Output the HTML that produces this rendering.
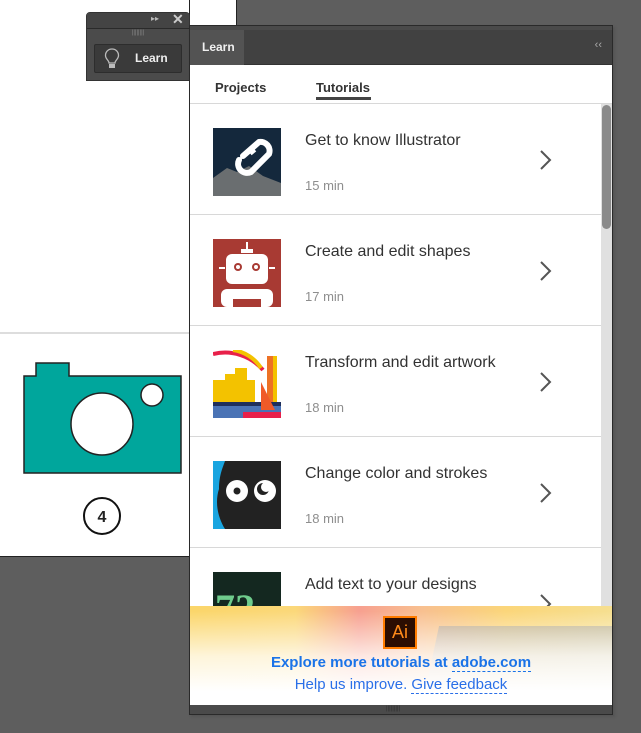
<!DOCTYPE html>
<html><head><style>
*{margin:0;padding:0;box-sizing:border-box}
body{width:641px;height:733px;background:#5e5e5e;position:relative;overflow:hidden;font-family:"Liberation Sans",sans-serif}
.abs{position:absolute}
.row{position:absolute;left:0;width:411px;height:111px;border-bottom:1px solid #d8d8d8}
.row .th{position:absolute;left:23px;top:24px;width:68px;height:68px;overflow:hidden}
.row .t{position:absolute;left:115px;top:28px;font-size:16px;color:#323232}
.row .m{position:absolute;left:115px;top:74px;font-size:13px;color:#8e8e8e}
.row .c{position:absolute;left:349px;top:45px}
</style></head><body>
<div class="abs" style="left:0;top:0;width:237px;height:80px;background:#fff;border-right:1px solid #222"></div>
<div class="abs" style="left:0;top:0;width:190px;height:557px;background:#fff;border-right:1px solid #222;border-bottom:1px solid #222"></div>
<div class="abs" style="left:0;top:332px;width:189px;height:2px;background:#ddd"></div>
<svg class="abs" style="left:0;top:320px" width="190" height="230">
<path d="M24 56H36V43H69V56H181V153H24Z" fill="#00a69c" stroke="#222" stroke-width="1.5"/>
<circle cx="102" cy="104" r="31" fill="#fff" stroke="#222" stroke-width="1.5"/>
<circle cx="152" cy="75" r="11" fill="#fff" stroke="#222" stroke-width="1.5"/>
<circle cx="102" cy="196" r="18" fill="#fff" stroke="#111" stroke-width="2"/>
<text x="102" y="202" text-anchor="middle" font-size="16" font-weight="bold" fill="#222" font-family="Liberation Sans">4</text>
</svg>
<div class="abs" style="left:86px;top:12px;width:104px;height:69px;background:#4b4b4b;border:1px solid #333;border-radius:4px 4px 0 0">
 <div style="height:16px;background:#444;border-bottom:1px solid #2a2a2a;position:relative">
  <span style="position:absolute;left:64px;top:1px;color:#bbb;font-size:8px">▸▸</span>
  <span style="position:absolute;left:85px;top:-2px;color:#ccc;font-size:14px;font-weight:bold">✕</span>
 </div>
 <div style="text-align:center;color:#888;font-size:6px;line-height:8px">||||||||</div>
 <div style="position:absolute;left:7px;top:31px;width:88px;height:29px;background:#3a3a3a;border:1px solid #2d2d2d;border-radius:2px">
  <svg style="position:absolute;left:9px;top:3px" width="16" height="22"><path d="M8 1C4 1 1.5 4 1.5 7.5C1.5 11 5 12.5 5 15H11C11 12.5 14.5 11 14.5 7.5C14.5 4 12 1 8 1Z" fill="none" stroke="#bbb" stroke-width="1.3"/><rect x="5" y="16" width="6" height="4" fill="#bbb"/></svg>
  <span style="position:absolute;left:40px;top:6px;color:#eee;font-size:12px;font-weight:bold">Learn</span>
 </div>
</div>
<div class="abs" style="left:189px;top:25px;width:424px;height:690px;background:#4a4a4a;border:1px solid #2a2a2a;box-shadow:2px 2px 2px #555">
 <div style="position:absolute;left:0;top:4px;width:422px;height:35px;background:#414141;border-bottom:1px solid #333"></div>
 <div style="position:absolute;left:0;top:4px;width:54px;height:35px;background:#535353;color:#f0f0f0;font-size:12px;font-weight:bold;padding:10px 0 0 12px">Learn</div>
 <div style="position:absolute;right:10px;top:13px;color:#aaa;font-size:11px">‹‹</div>
 <div style="position:absolute;left:0;top:39px;width:422px;height:640px;background:#fff;overflow:hidden">
  <div style="position:absolute;left:25px;top:15px;font-size:13px;font-weight:bold;color:#333">Projects</div>
  <div style="position:absolute;left:126px;top:15px;font-size:13px;font-weight:bold;color:#333">Tutorials</div>
  <div style="position:absolute;left:126px;top:32px;width:55px;height:3px;background:#444"></div>
  <div style="position:absolute;left:0;top:38px;width:422px;height:1px;background:#d8d8d8"></div>
  <div style="position:absolute;left:0;top:39px;width:422px;height:540px">
   <div class="row" style="top:0">
    <svg class="th" viewBox="0 0 68 68"><rect width="68" height="68" fill="#14283c"/><path d="M0 50L14 40L24 44L36 38L50 48L68 55V68H0Z" fill="#6a6e70"/><path d="M30 28L46 14A9 9 0 0 1 56 26L38 44A9 9 0 0 1 26 32" fill="none" stroke="#fff" stroke-width="6" stroke-linecap="round"/><rect x="36" y="20" width="6" height="6" fill="#fff" transform="rotate(-40 39 23)"/></svg>
    <div class="t">Get to know Illustrator</div><div class="m">15 min</div>
    <svg class="c" width="14" height="22"><path d="M2 2L11 11L2 20" fill="none" stroke="#555" stroke-width="2"/></svg>
   </div>
   <div class="row" style="top:111px">
    <svg class="th" viewBox="0 0 68 68"><rect width="68" height="68" fill="#a83a33"/><rect x="33" y="3" width="2" height="8" fill="#fff"/><rect x="28" y="10" width="12" height="4" fill="#fff"/><rect x="13" y="15" width="42" height="30" rx="6" fill="#fff"/><rect x="6" y="28" width="6" height="2" fill="#fff"/><rect x="56" y="28" width="6" height="2" fill="#fff"/><circle cx="25" cy="28" r="4" fill="#a83a33"/><circle cx="43" cy="28" r="4" fill="#a83a33"/><circle cx="25" cy="28" r="2" fill="#fff"/><circle cx="43" cy="28" r="2" fill="#fff"/><rect x="8" y="50" width="52" height="18" rx="6" fill="#fff"/><rect x="20" y="60" width="28" height="8" fill="#a83a33"/></svg>
    <div class="t">Create and edit shapes</div><div class="m">17 min</div>
    <svg class="c" width="14" height="22"><path d="M2 2L11 11L2 20" fill="none" stroke="#555" stroke-width="2"/></svg>
   </div>
   <div class="row" style="top:222px">
    <svg class="th" viewBox="0 0 68 68"><rect width="68" height="68" fill="#fff"/><path d="M0 4A50 50 0 0 1 50 20" fill="none" stroke="#e8204a" stroke-width="4"/><path d="M20 0A40 40 0 0 1 48 18" fill="none" stroke="#f3c200" stroke-width="4"/><rect x="54" y="6" width="10" height="48" fill="#f3c200"/><rect x="54" y="6" width="6" height="48" fill="#e8204a" opacity=".5"/><path d="M0 30H12V24H22V18H34V30H42V54H0Z" fill="#f3c200"/><rect x="0" y="52" width="68" height="16" fill="#4a73b5"/><rect x="0" y="52" width="68" height="4" fill="#1e2f5c"/><path d="M48 32V60H62Z" fill="#f05a28"/><rect x="30" y="62" width="38" height="6" fill="#e8204a"/></svg>
    <div class="t">Transform and edit artwork</div><div class="m">18 min</div>
    <svg class="c" width="14" height="22"><path d="M2 2L11 11L2 20" fill="none" stroke="#555" stroke-width="2"/></svg>
   </div>
   <div class="row" style="top:333px">
    <svg class="th" viewBox="0 0 68 68"><rect width="68" height="68" fill="#1aa5e0"/><path d="M12 0H68V68H12C4 55 2 40 6 28C6 14 10 6 12 0Z" fill="#222"/><circle cx="24" cy="30" r="11" fill="#fff"/><circle cx="24" cy="30" r="3.5" fill="#222"/><circle cx="52" cy="30" r="11" fill="#fff"/><circle cx="50" cy="28" r="6" fill="#222"/><circle cx="53" cy="26" r="5" fill="#fff"/></svg>
    <div class="t">Change color and strokes</div><div class="m">18 min</div>
    <svg class="c" width="14" height="22"><path d="M2 2L11 11L2 20" fill="none" stroke="#555" stroke-width="2"/></svg>
   </div>
   <div class="row" style="top:444px">
    <svg class="th" viewBox="0 0 68 68"><rect width="68" height="68" fill="#142820"/><text x="2" y="50" font-size="40" font-weight="bold" fill="#6fcc8c" font-family="Liberation Serif">72</text></svg>
    <div class="t">Add text to your designs</div>
    <svg class="c" width="14" height="22"><path d="M2 2L11 11L2 20" fill="none" stroke="#555" stroke-width="2"/></svg>
   </div>
  </div>
  <div style="position:absolute;left:411px;top:39px;width:11px;height:540px;background:#e0e0e0"></div>
  <div style="position:absolute;left:412px;top:40px;width:9px;height:124px;background:#8a8a8a;border-radius:5px"></div>
  <div style="position:absolute;left:0;top:541px;width:422px;height:100px;overflow:hidden;background:linear-gradient(90deg,#fbd66a 0%,#fbd87a 25%,#f7a090 40%,#f8c090 55%,#fbd67a 75%,#f6df90 100%)">
   <div style="position:absolute;left:240px;top:20px;width:200px;height:85px;background:linear-gradient(180deg,#9a9a9a 0%,#ccc 60%);transform:skewX(-12deg);opacity:.55"></div>
   <div style="position:absolute;left:0;top:0;width:422px;height:100px;background:linear-gradient(180deg,rgba(255,255,255,0) 5%,rgba(255,255,255,.75) 50%,#fff 85%)"></div>
   <div style="position:absolute;left:193px;top:10px;width:34px;height:33px;background:#2b0d02;border:2px solid #ff7c00;color:#ff8a1a;font-size:18px;text-align:center;line-height:28px">Ai</div>
   <div style="position:absolute;left:0;width:422px;top:48px;text-align:center;color:#1a73e8;font-size:15px;font-weight:bold">Explore more tutorials at <span style="border-bottom:1px dashed #1a73e8">adobe.com</span></div>
   <div style="position:absolute;left:0;width:422px;top:70px;text-align:center;color:#2a6fe8;font-size:15px">Help us improve. <span style="border-bottom:1px dashed #2a6fe8">Give feedback</span></div>
  </div>
 </div>
 <div style="position:absolute;left:196px;top:680px;color:#2e2e2e;font-size:6px">|||||||||</div>
</div>
</body></html>
